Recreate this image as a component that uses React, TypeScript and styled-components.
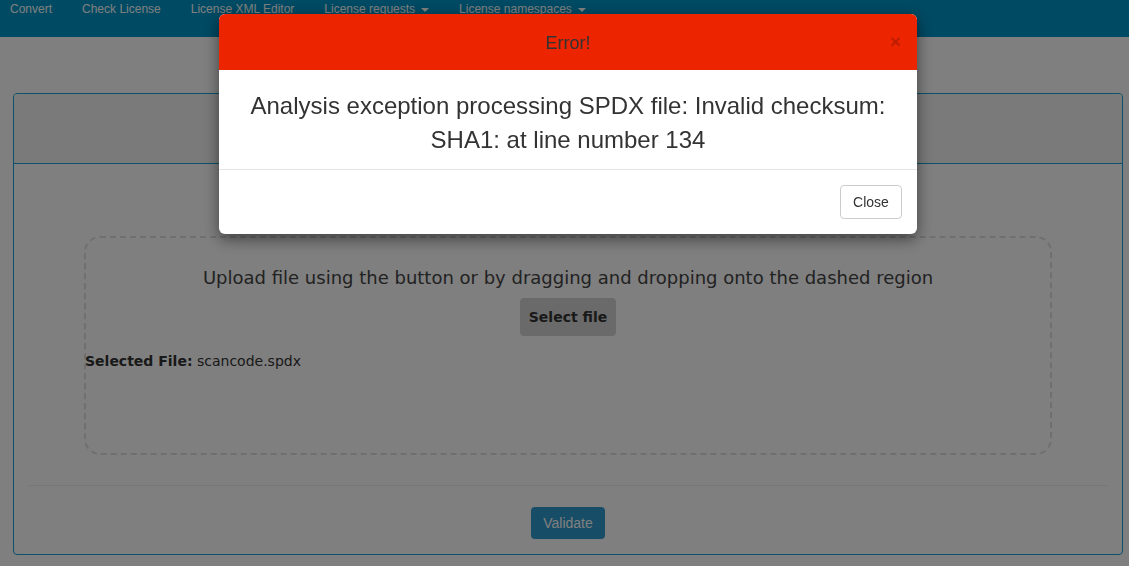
import React from 'react';
import styled, {createGlobalStyle} from 'styled-components';

const GlobalStyle = createGlobalStyle`
  body {
    margin: 0;
    background: #fff;
    font-family: "Liberation Sans", Arial, sans-serif;
    color: #333;
  }
`

const navItems = [
    {label: 'Convert'},
    {label: 'Check License'},
    {label: 'License XML Editor'},
    {label: 'License requests', dropdown: true},
    {label: 'License namespaces', dropdown: true},
]

const App = () => {
    return (
        <>
            <GlobalStyle/>
            <NavBar>
                {navItems.map((item) => (
                    <NavItem key={item.label}>
                        {item.label}
                        {item.dropdown && <Caret/>}
                    </NavItem>
                ))}
            </NavBar>
            <Page>
                <Panel>
                    <PanelHeader/>
                    <PanelBody>
                        <DropZone>
                            <UploadText>Upload file using the button or by dragging and dropping onto the dashed region</UploadText>
                            <SelectButton>Select file</SelectButton>
                            <SelectedFile><b>Selected File:</b> scancode.spdx</SelectedFile>
                        </DropZone>
                        <Divider/>
                        <ValidateButton disabled>Validate</ValidateButton>
                    </PanelBody>
                </Panel>
            </Page>
            <Backdrop>
                <Modal>
                    <ModalHeader>
                        <ModalTitle>Error!</ModalTitle>
                        <CloseX>×</CloseX>
                    </ModalHeader>
                    <ModalBody>
                        Analysis exception processing SPDX file: Invalid checksum: SHA1: at line number 134
                    </ModalBody>
                    <ModalFooter>
                        <CloseButton>Close</CloseButton>
                    </ModalFooter>
                </Modal>
            </Backdrop>
        </>
    );
};

export default App;

const NavBar = styled.nav`
  height: 37px;
  background: #0094c6;
  display: flex;
  align-items: flex-start;
  gap: 30px;
  padding: 0 0 0 10px;
  box-sizing: border-box;
`
const NavItem = styled.span`
  font-size: 12px;
  line-height: 18px;
  color: #fcffff;
  display: inline-flex;
  align-items: center;
  white-space: nowrap;
`
const Caret = styled.span`
  display: inline-block;
  margin-left: 6px;
  margin-top: 2px;
  border-top: 4px solid #fcffff;
  border-left: 4px solid transparent;
  border-right: 4px solid transparent;
`
const Page = styled.div`
  padding: 56px 6px 0 13px;
`
const Panel = styled.div`
  border: 1px solid #18a4d8;
  border-radius: 4px;
  overflow: hidden;
`
const PanelHeader = styled.div`
  height: 69px;
  background: #f5f5f5;
  border-bottom: 1px solid #18a4d8;
`
const PanelBody = styled.div`
  padding: 72px 15px 15px;
  display: flex;
  flex-direction: column;
  align-items: center;
`
const DropZone = styled.div`
  align-self: stretch;
  margin: 0 55px;
  height: 219px;
  box-sizing: border-box;
  border: 2px dashed #dedede;
  border-radius: 16px;
  display: flex;
  flex-direction: column;
  align-items: center;
  font-family: "DejaVu Sans", Verdana, sans-serif;
  color: #444;
`
const UploadText = styled.div`
  font-size: 18px;
  margin-top: 28px;
  line-height: 24px;
`
const SelectButton = styled.button`
  margin-top: 8px;
  width: 96px;
  height: 38px;
  border: none;
  border-radius: 4px;
  background: #d5d5d5;
  font-family: "DejaVu Sans", Verdana, sans-serif;
  font-weight: bold;
  font-size: 14px;
  color: #333;
`
const SelectedFile = styled.div`
  align-self: stretch;
  margin-top: 16px;
  font-size: 14px;
  line-height: 18px;
  color: #333;
  margin-left: -1px;
`
const Divider = styled.hr`
  align-self: stretch;
  border: none;
  border-top: 1px solid #eee;
  margin: 30px 0 21px;
`
const ValidateButton = styled.button`
  width: 74px;
  height: 32px;
  border: none;
  border-radius: 4px;
  background: #2e9acc;
  color: #fff;
  font-family: "Liberation Sans", Arial, sans-serif;
  font-size: 14px;
`
const Backdrop = styled.div`
  position: fixed;
  inset: 0;
  background: rgba(0, 0, 0, 0.5);
  display: flex;
  justify-content: center;
  align-items: flex-start;
  padding-left: 7px;
`
const Modal = styled.div`
  margin-top: 14px;
  width: 698px;
  background: #fff;
  border-radius: 6px;
  overflow: hidden;
  box-shadow: 0 5px 15px rgba(0, 0, 0, 0.5);
`
const ModalHeader = styled.div`
  position: relative;
  height: 56px;
  background: #ec2500;
  display: flex;
  align-items: center;
  justify-content: center;
`
const ModalTitle = styled.h4`
  margin: 0;
  font-size: 18px;
  font-weight: normal;
  color: #333;
  padding-top: 2px;
`
const CloseX = styled.span`
  position: absolute;
  right: 16px;
  top: 18px;
  font-size: 19px;
  font-weight: bold;
  line-height: 1;
  color: #000;
  opacity: 0.2;
`
const ModalBody = styled.div`
  padding: 19px 15px 12px;
  font-size: 24px;
  line-height: 34px;
  text-align: center;
  color: #333;
  border-bottom: 1px solid #e5e5e5;
`
const ModalFooter = styled.div`
  padding: 15px 15px 15px;
  display: flex;
  justify-content: flex-end;
`
const CloseButton = styled.button`
  width: 62px;
  height: 34px;
  border: 1px solid #ccc;
  border-radius: 4px;
  background: #fff;
  color: #333;
  font-family: "Liberation Sans", Arial, sans-serif;
  font-size: 14px;
`
